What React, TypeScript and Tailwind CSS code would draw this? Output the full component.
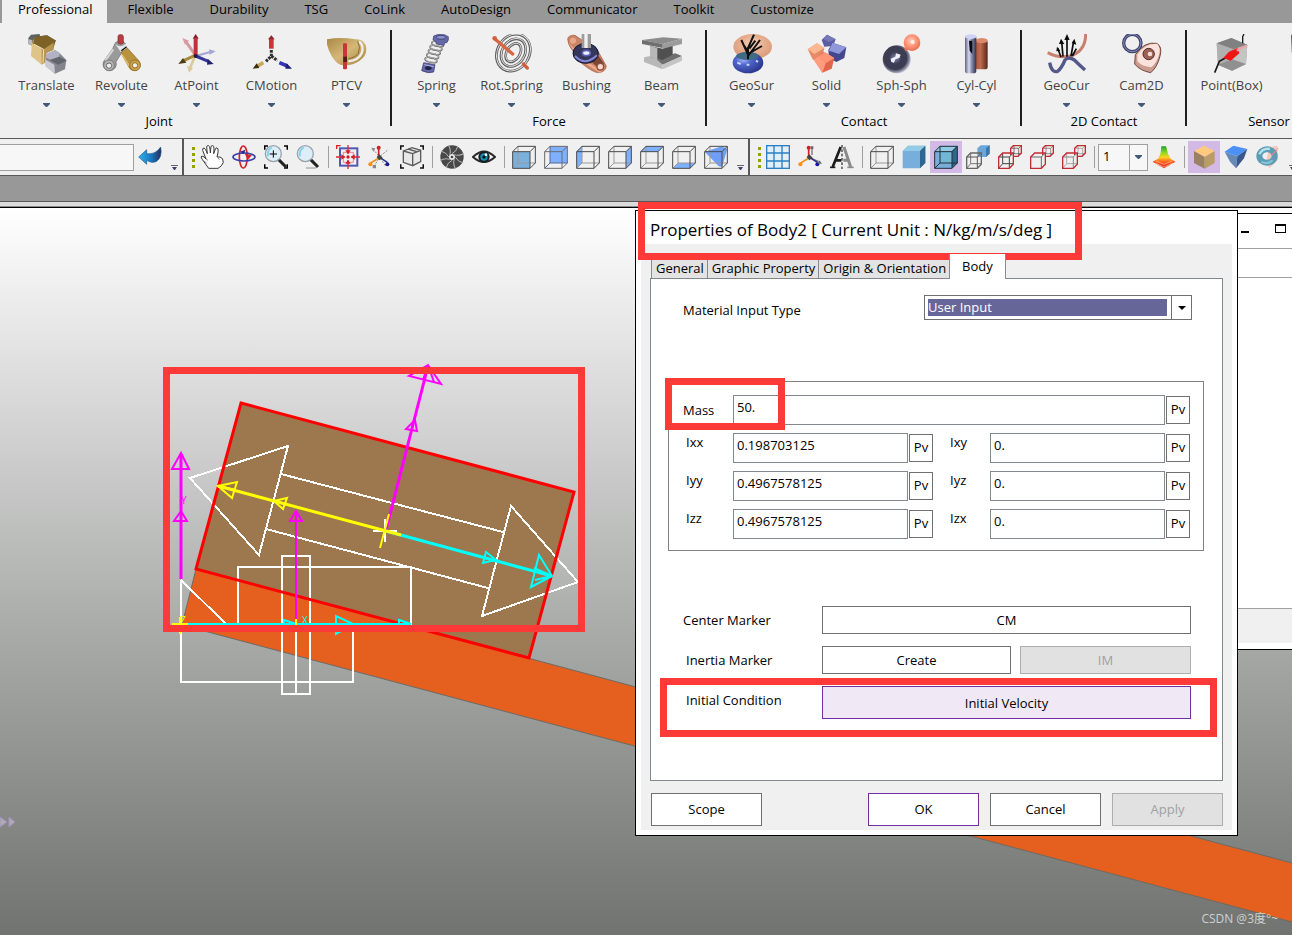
import type { ReactNode } from "react";

const tabs = ["Flexible", "Durability", "TSG", "CoLink", "AutoDesign", "Communicator", "Toolkit", "Customize"];

function Big({ children }: { children: ReactNode }) {
  return (
    <svg viewBox="0 0 120 120" className="h-10 w-10" aria-hidden="true">
      {children}
    </svg>
  );
}

function Small({ children }: { children: ReactNode }) {
  return (
    <svg viewBox="0 0 72 72" className="h-6 w-6" aria-hidden="true">
      {children}
    </svg>
  );
}

function Gradients() {
  return (
    <svg className="absolute h-0 w-0" aria-hidden="true">
      <defs>
        <radialGradient id="blueBall" cx="0.35" cy="0.35" r="0.7">
          <stop offset="0" stopColor="#a8b8ff" />
          <stop offset="0.35" stopColor="#5068cc" />
          <stop offset="1" stopColor="#2b358c" />
        </radialGradient>
        <radialGradient id="darkBall" cx="0.45" cy="0.45" r="0.55">
          <stop offset="0" stopColor="#8888a8" />
          <stop offset="0.4" stopColor="#3c3c54" />
          <stop offset="0.75" stopColor="#3c3c52" />
          <stop offset="1" stopColor="#b9b9cc" />
        </radialGradient>
        <radialGradient id="peachBall" cx="0.5" cy="0.4" r="0.6">
          <stop offset="0" stopColor="#f8d4c0" />
          <stop offset="0.5" stopColor="#e8b090" />
          <stop offset="1" stopColor="#d99a78" />
        </radialGradient>
        <radialGradient id="coralBall" cx="0.45" cy="0.4" r="0.6">
          <stop offset="0" stopColor="#ffd0c0" />
          <stop offset="0.6" stopColor="#ff8f70" />
          <stop offset="1" stopColor="#e07050" />
        </radialGradient>
        <linearGradient id="steel" x1="0" x2="1">
          <stop offset="0" stopColor="#5f627e" />
          <stop offset="0.35" stopColor="#d7daf0" />
          <stop offset="0.6" stopColor="#8488a8" />
          <stop offset="1" stopColor="#2e3048" />
        </linearGradient>
        <linearGradient id="copper" x1="0" x2="1">
          <stop offset="0" stopColor="#b0583c" />
          <stop offset="0.4" stopColor="#c06a4c" />
          <stop offset="1" stopColor="#54281c" />
        </linearGradient>
        <linearGradient id="gold" x1="0" y1="0" x2="1" y2="1">
          <stop offset="0" stopColor="#a88744" />
          <stop offset="0.5" stopColor="#d4b878" />
          <stop offset="1" stopColor="#a5813c" />
        </linearGradient>
        <linearGradient id="rainbow" x1="0" y1="0" x2="0" y2="1">
          <stop offset="0" stopColor="#20a030" />
          <stop offset="0.3" stopColor="#88d820" />
          <stop offset="0.55" stopColor="#ffd020" />
          <stop offset="0.75" stopColor="#ff6a20" />
          <stop offset="1" stopColor="#e82020" />
        </linearGradient>
        <linearGradient id="skyArrow" x1="0" x2="1">
          <stop offset="0" stopColor="#2fb0e8" />
          <stop offset="0.6" stopColor="#1672ba" />
          <stop offset="1" stopColor="#2a2c5a" />
        </linearGradient>
        <linearGradient id="grayFade" x1="0" y1="0" x2="0" y2="1">
          <stop offset="0" stopColor="#4c4c4c" />
          <stop offset="1" stopColor="#d0d0d0" />
        </linearGradient>
      </defs>
    </svg>
  );
}

/* ---------- ribbon icons ---------- */

const Translate = () => (
  <Big>
    <path d="M4 12L12 2L38 0L40 14L20 24L20 36L4 30Z" fill="#5e6368" />
    <path d="M4 16L16 18L16 34L4 30Z" fill="#b9bcc2" />
    <path d="M56 62L84 48L98 58L118 78L114 106L84 119L56 96Z" fill="#83868c" />
    <path d="M56 60L84 48L98 58L96 70L72 78L54 70Z" fill="#b2b2c4" />
    <path d="M68 78L96 68L119 80L94 92Z" fill="#62656c" />
    <path d="M54 76L82 92L84 118L58 100Z" fill="#c9cad2" />
    <path d="M22 8L60 4L86 20L78 48L48 60L14 36Z" fill="#765b22" />
    <path d="M22 10L14 34L12 66L44 92L50 60L44 44Z" fill="#dfc488" />
    <path d="M44 46L80 22L80 46L58 58L54 86L44 92Z" fill="#b8954e" />
    <path d="M22 10L60 4L88 20L50 46L18 30Z" fill="#7d6126" />
    <path d="M20 30L50 46L48 88" fill="none" stroke="#f5e2b4" strokeWidth="3" />
  </Big>
);

const Revolute = () => (
  <Big>
    <path d="M40 26Q54 14 70 28L60 54L42 84A20 20 0 1 1 4 84L32 44Z" fill="#9a9a9a" stroke="#707070" strokeWidth="2" />
    <path d="M34 46L10 80" stroke="#d4d4d4" strokeWidth="6" />
    <path d="M58 54L76 42L112 82A18 18 0 1 1 80 98L62 66Z" fill="#b8923c" stroke="#8d6c22" strokeWidth="2" />
    <path d="M60 62L82 96" stroke="#e0bc68" strokeWidth="5" />
    <circle cx="21" cy="94" r="16" fill="#b4b4b4" stroke="#7a7a7a" strokeWidth="3" />
    <circle cx="21" cy="95" r="8" fill="#efefef" stroke="#6a6a6a" strokeWidth="3" />
    <circle cx="99" cy="94" r="16" fill="#cba54f" stroke="#987424" strokeWidth="3" />
    <circle cx="99" cy="94" r="8" fill="#efefef" stroke="#94701e" strokeWidth="3" />
    <path d="M40 30Q54 44 70 30L74 42L56 54Z" fill="#e6e6e6" />
    <rect x="48" y="2" width="16" height="28" rx="6" fill="#c03a42" stroke="#7c2228" strokeWidth="2" />
    <path d="M58 50L74 38" stroke="#111" strokeWidth="4" />
  </Big>
);

const AtPoint = () => (
  <Big>
    <path d="M54 62L26 22" stroke="#d99a9e" strokeWidth="9" />
    <path d="M16 12L36 20L24 32Z" fill="#d99a9e" />
    <path d="M56 66L100 54" stroke="#a4a4d8" strokeWidth="6" />
    <path d="M96 46L116 52L98 62Z" fill="#a4a4d8" />
    <path d="M54 66L40 100" stroke="#d8ca9c" strokeWidth="8" />
    <path d="M30 96L48 102L36 116Z" fill="#d8ca9c" />
    <path d="M54 64L20 80" stroke="#a8893a" strokeWidth="9" />
    <path d="M4 90L18 72L28 86Z" fill="#4d3d14" />
    <path d="M56 66L94 82" stroke="#35359a" strokeWidth="9" />
    <path d="M92 74L110 90L90 92Z" fill="#22226c" />
    <path d="M56 66V14" stroke="#c2303a" strokeWidth="12" />
    <path d="M47 14L56 0L65 14Z" fill="#8c1c24" />
    <circle cx="56" cy="66" r="6" fill="#1c1c44" />
  </Big>
);

const CMotion = () => (
  <Big>
    <path d="M58 44V14" stroke="#c9353c" strokeWidth="14" />
    <path d="M48 16L58 4L68 16Z" fill="#8a2a2e" />
    <path d="M58 48V66L42 82M58 66L76 80" stroke="#303030" strokeWidth="9" fill="none" strokeDasharray="8 3" />
    <path d="M34 86L14 98" stroke="#c9a95a" strokeWidth="11" />
    <path d="M2 104L14 88L22 102Z" fill="#3b2e0c" />
    <path d="M82 86L106 96" stroke="#3434b0" strokeWidth="11" />
    <path d="M104 88L120 104L100 104Z" fill="#1c1c78" />
  </Big>
);

const Ptcv = () => (
  <Big>
    <path d="M0 16Q40 8 84 16Q108 14 116 34Q124 62 98 80Q70 98 40 92Q22 86 6 50Q-4 24 0 16Z" fill="url(#gold)" />
    <path d="M96 22Q112 34 104 58Q94 80 64 82" fill="none" stroke="#efefef" strokeWidth="7" />
    <path d="M92 22Q102 40 94 58Q86 70 64 74" fill="none" stroke="#8a6c2c" strokeWidth="3" />
    <rect x="48" y="28" width="12" height="78" rx="3" fill="#c8363a" />
    <path d="M49 68H60V84H49Z" fill="#5c1a16" />
  </Big>
);

const Spring = () => (
  <Big>
    {[28, 40, 52, 64, 76].map((y, i) => (
      <g key={y} transform={`rotate(12 ${62 - i * 5} ${y + 2})`}>
        <ellipse cx={62 - i * 5} cy={y + 2} rx="18" ry="7" fill="none" stroke="#6c6c6c" strokeWidth="5" />
        <ellipse cx={62 - i * 5} cy={y + 1} rx="18" ry="7" fill="none" stroke="#cfcfcf" strokeWidth="2" />
      </g>
    ))}
    <path d="M50 6Q74 -6 94 8V18Q90 30 84 26L80 34L58 30L56 22L48 18Z" fill="#6468a8" stroke="#33366c" strokeWidth="2" />
    <ellipse cx="72" cy="10" rx="14" ry="6" fill="#8c90cc" stroke="#2b2d58" strokeWidth="2" />
    <path d="M20 86L54 92L50 114Q34 120 14 110Z" fill="#6266a6" stroke="#2d3060" strokeWidth="2" />
    <ellipse cx="34" cy="102" rx="10" ry="6" fill="#20244c" />
    <path d="M22 92L50 98" stroke="#b2b5e6" strokeWidth="3" />
  </Big>
);

const RotSpring = () => (
  <Big>
    {[50, 36, 22].map((r) => (
      <g key={r} transform="rotate(-58 64 56)">
        <ellipse cx="64" cy="56" rx={r + 8} ry={r - 2} fill="none" stroke="#5a5a5a" strokeWidth="8" />
        <ellipse cx="65" cy="56" rx={r + 8} ry={r - 2} fill="none" stroke="#dcdcdc" strokeWidth="3" />
      </g>
    ))}
    <path d="M94 90L106 102" stroke="#d2613e" strokeWidth="10" strokeLinecap="round" />
    <path d="M8 14L62 60" stroke="#d66846" strokeWidth="10" strokeLinecap="round" />
    <circle cx="8" cy="13" r="7" fill="#d2603e" />
  </Big>
);

const Bushing = () => (
  <Big>
    <path d="M2 14Q6 2 24 4L92 50L118 96Q116 114 94 116Q78 116 44 88L14 46Q2 30 2 14Z" fill="#c98468" stroke="#9d5b44" strokeWidth="2" />
    <path d="M4 24L20 52L60 92L98 116L114 104L90 102L52 78Z" fill="#f0a78c" />
    <path d="M82 48L112 90L92 100L74 84Z" fill="#7c4634" />
    <circle cx="18" cy="20" r="9" fill="#e9a88c" />
    <circle cx="100" cy="98" r="10" fill="#f2d8cc" stroke="#8b4c36" strokeWidth="4" />
    <ellipse cx="56" cy="58" rx="38" ry="30" fill="#34365c" stroke="#14152c" strokeWidth="3" />
    <path d="M24 66Q54 98 90 64" fill="none" stroke="#8488d4" strokeWidth="6" />
    <ellipse cx="58" cy="57" rx="12" ry="8" fill="#eef0ff" stroke="#5c62b8" strokeWidth="5" />
    <rect x="44" y="0" width="28" height="42" fill="#9c9c9c" />
    <rect x="52" y="0" width="10" height="42" fill="#f0f0f0" />
  </Big>
);

const Beam = () => (
  <Big>
    <path d="M0 18L64 10L120 14L62 30Z" fill="#8c8c8c" />
    <path d="M0 18L62 30V42L0 30Z" fill="#6f6f6f" />
    <path d="M62 30L120 14V30L62 44Z" fill="#9c9c9c" />
    <path d="M6 70L44 62L60 84L62 106L6 84Z" fill="#b8b8b8" />
    <path d="M44 76L100 58L120 66L62 92Z" fill="#707070" />
    <path d="M62 92L120 66V80L62 106Z" fill="#c4c4c4" />
    <path d="M24 36L62 44L92 36V62L62 78L24 68Z" fill="#505050" />
    <path d="M24 36L46 42V76L24 68Z" fill="#b8b8b8" />
  </Big>
);

const GeoSur = () => (
  <Big>
    <ellipse cx="62" cy="38" rx="58" ry="38" fill="url(#peachBall)" />
    <ellipse cx="48" cy="86" rx="46" ry="32" fill="url(#blueBall)" />
    <ellipse cx="46" cy="66" rx="34" ry="12" fill="#3f6c84" />
    <path d="M48 76V42L66 2M48 62L28 18M48 66L84 18M48 60L90 36M46 50L34 32M52 44L70 20" fill="none" stroke="#101010" strokeWidth="6" />
    <path d="M16 86L26 90M44 92H52M72 80L78 84" stroke="#c8dcff" strokeWidth="6" />
  </Big>
);

const Solid = () => (
  <Big>
    <path d="M44 18L60 2L86 16L78 36L52 38Z" fill="#5b5da2" />
    <path d="M60 2L86 16L66 24L48 14Z" fill="#7678b8" />
    <path d="M64 48L76 26L118 40L112 72L88 84L66 72Z" fill="#44478e" />
    <path d="M76 26L118 40L96 60L66 50Z" fill="#9098dc" />
    <path d="M2 46L30 28L52 42L46 68L18 78Z" fill="#e78a66" />
    <path d="M2 46L30 28L52 42L22 60Z" fill="#ffb892" />
    <path d="M22 76L48 54L82 72L74 104L46 116Z" fill="#e0654a" />
    <path d="M34 66L54 54L82 72L56 88Z" fill="#ff9474" />
    <path d="M20 78L34 66L56 88L46 116Z" fill="#ff9c80" />
  </Big>
);

const SphSph = () => (
  <Big>
    <circle cx="44" cy="76" r="42" fill="url(#darkBall)" />
    <path d="M26 74L40 68L42 58L56 62L52 72L40 76L36 86L28 84Z" fill="#eef0ff" />
    <path d="M66 40L82 46L70 52Z" fill="#e8735c" />
    <circle cx="90" cy="26" r="25" fill="url(#coralBall)" />
    <circle cx="92" cy="24" r="6" fill="#fff0e8" />
  </Big>
);

const CylCyl = () => (
  <Big>
    <rect x="56" y="18" width="36" height="88" rx="8" fill="url(#copper)" />
    <ellipse cx="74" cy="20" rx="18" ry="8" fill="#d98a6c" />
    <rect x="24" y="4" width="34" height="114" rx="8" fill="url(#steel)" />
    <ellipse cx="41" cy="8" rx="17" ry="7" fill="#cfd2f8" />
    <path d="M36 20H46V60L38 50Z" fill="#0a0a14" />
  </Big>
);

const GeoCur = () => (
  <Big>
    <path d="M2 56Q40 76 76 64Q116 48 116 0" fill="none" stroke="#c8806e" strokeWidth="9" />
    <path d="M8 86Q14 118 32 112Q44 102 54 78Q64 66 82 78Q96 92 114 108" fill="none" stroke="#55588a" strokeWidth="10" />
    <path d="M60 68V10M48 68L44 22M72 66L80 22M42 70L32 42M76 66L88 44" stroke="#0c0c0c" strokeWidth="5" />
    <path d="M60 0L68 18H52ZM42 14L52 30H36ZM82 14L88 32L74 28ZM30 38L40 50L28 52Z" fill="#0c0c0c" />
  </Big>
);

const Cam2D = () => (
  <Big>
    <path d="M40 62Q66 22 104 28Q122 38 114 66Q106 100 86 116Q54 110 38 90Z" fill="#cb9c90" stroke="#75433a" strokeWidth="3" />
    <path d="M46 62Q70 26 106 30Q118 44 110 66Q104 86 88 100Q60 98 46 82Z" fill="#fbe2dc" />
    <circle cx="80" cy="60" r="17" fill="#9c6258" stroke="#512a24" strokeWidth="3" />
    <circle cx="84" cy="60" r="7" fill="#f3dcd6" />
    <circle cx="31" cy="27" r="26" fill="none" stroke="#3e4168" strokeWidth="10" />
    <circle cx="31" cy="27" r="26" fill="none" stroke="#8c8fbe" strokeWidth="3" />
  </Big>
);

const PointBox = () => (
  <Big>
    <path d="M14 28L58 12L106 32L102 90L60 110L18 92Z" fill="#a5a5a5" />
    <path d="M14 28L58 12L106 32L64 46Z" fill="#808080" />
    <path d="M64 46L106 32L102 90L62 110Z" fill="#c4c4c4" />
    <path d="M14 28L64 46L62 110L18 92Z" fill="#b0b0b0" />
    <path d="M18 92L60 76L102 90L60 110Z" fill="#909090" />
    <path d="M92 28V8L96 0" stroke="#1a1a1a" strokeWidth="4" fill="none" />
    <path d="M8 116L22 82L40 72" stroke="#1a1a1a" strokeWidth="5" fill="none" />
    <path d="M34 72L50 54L76 42L82 58L56 80Z" fill="#f01414" />
    <path d="M74 50L104 34" stroke="#f0a0a0" strokeWidth="6" />
  </Big>
);

const SensorCut = () => (
  <Big>
    <rect x="12" y="0" width="100" height="58" rx="6" fill="url(#grayFade)" />
  </Big>
);

type Item = { label: string; icon: ReactNode; noMenu?: boolean };

const groups: { title: string; items: (Item | null)[] }[] = [
  {
    title: "Joint",
    items: [
      null,
      { label: "Translate", icon: <Translate /> },
      { label: "Revolute", icon: <Revolute /> },
      { label: "AtPoint", icon: <AtPoint /> },
      { label: "CMotion", icon: <CMotion /> },
      { label: "PTCV", icon: <Ptcv /> },
    ],
  },
  {
    title: "Force",
    items: [
      { label: "Spring", icon: <Spring /> },
      { label: "Rot.Spring", icon: <RotSpring /> },
      { label: "Bushing", icon: <Bushing /> },
      { label: "Beam", icon: <Beam /> },
    ],
  },
  {
    title: "Contact",
    items: [
      { label: "GeoSur", icon: <GeoSur /> },
      { label: "Solid", icon: <Solid /> },
      { label: "Sph-Sph", icon: <SphSph /> },
      { label: "Cyl-Cyl", icon: <CylCyl /> },
    ],
  },
  {
    title: "2D Contact",
    items: [
      { label: "GeoCur", icon: <GeoCur /> },
      { label: "Cam2D", icon: <Cam2D /> },
    ],
  },
  {
    title: "Sensor",
    items: [
      { label: "Point(Box)", icon: <PointBox />, noMenu: true },
      { label: "Line", icon: <SensorCut />, noMenu: true },
    ],
  },
];

function Ribbon() {
  return (
    <div className="-ml-[73px] flex h-[115px] pt-[7px] pb-3">
      {groups.map((g) => (
        <section key={g.title} className="flex shrink-0 flex-col border-r-2 border-[#1f1f1f] pr-[6px] pl-[7px]">
          <div className="flex h-[84px] shrink-0 items-start">
            {g.items.map((it, i) =>
              it ? (
                <button key={it.label} className="flex w-[75px] flex-col items-center pt-1 text-[#444]">
                  {it.icon}
                  <span className="mt-px leading-5">{it.label}</span>
                  {!it.noMenu && (
                    <svg viewBox="0 0 7 4" className="mt-2 h-1 w-[7px]" aria-hidden="true">
                      <path d="M0 0H7V1L4 4H3L0 1Z" fill="#44597a" />
                    </svg>
                  )}
                </button>
              ) : (
                <span key={i} className="w-[75px]" />
              )
            )}
          </div>
          <h2 className="text-center leading-[14px]">{g.title}</h2>
        </section>
      ))}
    </div>
  );
}

/* ---------- toolbar icons ---------- */

const cubeLines = "M2 20H54V70H2ZM2 20L18 4H70L54 20M70 4V54L54 70M18 4V54H70M18 54L2 70";

function Cube({ face, color = "#7fb0ff", line = "#4a4a4a", back = "#9a9a9a" }: { face?: string; color?: string; line?: string; back?: string }) {
  return (
    <Small>
      {face && <path d={face} fill={color} />}
      <path d="M18 4V54H70M18 54L2 70" fill="none" stroke={back} strokeWidth="3" />
      <path d="M2 20H54V70H2ZM2 20L18 4H70L54 20M70 4V54L54 70" fill="none" stroke={line} strokeWidth="3" />
    </Small>
  );
}

// two stacked cubes: silhouette in one colour, inner edges in another
function TwinCube({ outline, inner, hidden = "none", fill }: { outline: string; inner: string; hidden?: string; fill?: boolean }) {
  return (
    <Small>
      {fill ? (
        <>
          <path d="M34 10L44 1H71V26L60 36H34Z" fill="#6ca6d8" />
          <path d="M60 10L71 1V26L60 36Z" fill="#3d78a8" />
        </>
      ) : (
        <>
          <path d="M48 2V26H70M40 10H62V32M62 10L70 2" fill="none" stroke={inner} strokeWidth="2" />
          <path d="M38 30V10L46 2H70V24L60 34H48" fill="none" stroke={outline} strokeWidth="4" />
        </>
      )}
      <path d="M14 24V56H46M14 56L2 70" fill="none" stroke={hidden} strokeWidth="3" />
      <path d="M2 36H34V70M34 36L46 24" fill="none" stroke={inner} strokeWidth="3" />
      <path d="M2 70V36L14 24H46V58L34 70Z" fill="none" stroke={outline} strokeWidth="4" />
    </Small>
  );
}

const Hand = () => (
  <Small>
    <path
      d="M26 70L6 42Q0 34 6 33Q12 34 18 42L8 16Q7 9 12 9Q17 10 22 26L20 6Q21 0 26 2Q30 4 31 24L33 4Q36 -1 41 4Q43 8 41 26L47 10Q52 6 54 12Q56 18 51 36L60 36Q70 38 70 52Q66 64 54 70Z"
      fill="#fff"
      stroke="#3a3a3a"
      strokeWidth="3"
    />
    <path d="M18 42L24 46M6 44L20 54M52 36L58 44" stroke="#888" strokeWidth="3" />
  </Small>
);

const Orbit = () => (
  <Small>
    <ellipse cx="34" cy="36" rx="12" ry="33" fill="none" stroke="#d8202c" strokeWidth="5" />
    <ellipse cx="36" cy="36" rx="33" ry="12" fill="none" stroke="#3840a8" strokeWidth="5" />
    <path d="M38 26L60 30L48 44Z" fill="#d8202c" />
    <path d="M24 20L40 14L36 28Z" fill="#222c90" />
  </Small>
);

const Lens = ({ fit }: { fit?: boolean }) => (
  <Small>
    {fit && <path d="M2 14V3H12M60 3H70V14M2 58V69H12M60 69H70V58" fill="none" stroke="#000" strokeWidth="5" />}
    <path d="M44 44L66 66" stroke="#222" strokeWidth="9" />
    <circle cx="28" cy="26" r="24" fill="#dceef8" stroke="#9aa2aa" strokeWidth="4" />
    <path d="M12 34Q8 14 24 8" fill="none" stroke="#8ccff0" strokeWidth="6" />
    {fit && <path d="M28 16V38M17 27H39" stroke="#000" strokeWidth="3" />}
    {!fit && <path d="M30 69H60" stroke="#aaa" strokeWidth="4" />}
  </Small>
);

const Target = () => (
  <Small>
    <path d="M2 12V2H14" fill="none" stroke="#e02028" strokeWidth="4" />
    <rect x="12" y="10" width="52" height="52" fill="none" stroke="#5058b0" strokeWidth="6" />
    <path d="M22 22H52V52H22Z" fill="none" stroke="#f08088" strokeWidth="3" />
    <path d="M36 0V26M36 46V72M0 36H26M46 36H72" fill="none" stroke="#e02834" strokeWidth="4" />
    <path d="M28 16L36 28L44 16ZM28 56L36 44L44 56ZM16 28L28 36L16 44ZM56 28L44 36L56 44Z" fill="#d81828" />
    <circle cx="36" cy="36" r="5" fill="#d81828" />
  </Small>
);

const Axes = ({ low }: { low?: boolean }) => (
  <Small>
    {!low && <path d="M14 12L34 34M58 16L36 34M18 64L34 38M52 62L36 38" stroke="#8a8a8a" strokeWidth="3" strokeDasharray="6 4" />}
    {low && <path d="M40 40L62 50M42 30V8" stroke="#777" strokeWidth="4" />}
    <path d="M34 38L8 54" stroke="#f59018" strokeWidth="5" />
    <path d="M36 38L58 52" stroke="#2c3488" strokeWidth="5" />
    <path d="M32 36V8" stroke="#c82030" strokeWidth="5" />
    <circle cx="32" cy="8" r="6" fill="#d81c28" />
    <circle cx="7" cy="58" r="6" fill="#ff8c10" />
    <circle cx="58" cy="58" r="6" fill="#14149c" />
    <path d="M26 36L34 28L44 38L34 46Z" fill="#444" />
    {!low && <path d="M10 8L22 10L16 20ZM14 60H24V70H14Z" fill="#888" />}
    {low && <path d="M64 46L72 56L60 56ZM38 4H46V12H38Z" fill="#666" />}
  </Small>
);

const FitCube = () => (
  <Small>
    <path d="M2 14V3H12M60 3H70V14M2 58V69H12M60 69H70V58" fill="none" stroke="#111" strokeWidth="5" />
    <path d="M10 18L36 8L62 16V50L38 62L10 52Z" fill="#e8e8e8" stroke="#5c5c5c" strokeWidth="4" />
    <path d="M10 18L38 26L62 16M38 26V62M24 12L50 20" fill="none" stroke="#5c5c5c" strokeWidth="4" />
  </Small>
);

const Aperture = () => (
  <Small>
    <circle cx="36" cy="36" r="35" fill="#484848" />
    {[0, 45, 90, 135, 180, 225, 270, 315].map((a) => (
      <path key={a} d="M36 26Q50 20 54 2" fill="none" stroke="#b8b8b8" strokeWidth="3" transform={`rotate(${a} 36 36)`} />
    ))}
    <circle cx="36" cy="36" r="9" fill="#e8e8e8" />
    <circle cx="36" cy="36" r="4" fill="#444" />
  </Small>
);

const Eye = () => (
  <Small>
    <path d="M3 36Q36 4 69 36Q36 66 3 36Z" fill="#f4f4f4" stroke="#2a2a2a" strokeWidth="6" />
    <circle cx="36" cy="36" r="17" fill="#161e24" />
    <circle cx="36" cy="36" r="11" fill="#178fae" />
    <circle cx="36" cy="36" r="5" fill="#06121a" />
    <circle cx="42" cy="29" r="4" fill="#fff" />
  </Small>
);

const GridIcon = () => (
  <Small>
    <rect x="2" y="2" width="68" height="68" fill="#e4eef6" stroke="#2b7fc2" strokeWidth="4" />
    <path d="M24 2V70M48 2V70M2 24H70M2 48H70" stroke="#2b7fc2" strokeWidth="4" />
  </Small>
);

const Mirror = () => (
  <Small>
    <path d="M32 6L8 66M14 46H34" stroke="#1c1c1c" strokeWidth="8" fill="none" />
    <path d="M0 67H16" stroke="#1c1c1c" strokeWidth="5" />
    <path d="M42 6L62 66M40 46H56" stroke="#8a8a8a" strokeWidth="9" fill="none" />
    <path d="M52 67H71" stroke="#8a8a8a" strokeWidth="5" />
    <path d="M36 0V72" stroke="#000" strokeWidth="3" strokeDasharray="8 5" />
  </Small>
);

const SolidCube = ({ edges }: { edges?: boolean }) => (
  <Small>
    <path d="M2 18L18 2H70V54L54 70H2Z" fill="#78aedb" />
    <path d="M2 18L18 2H70L54 18Z" fill="#94cbe4" />
    <path d="M54 18L70 2V54L54 70Z" fill="#2f6790" />
    {edges && <path d="M18 20H54V54H18Z" fill="#72b8d4" />}
    {edges && <path d={cubeLines} fill="none" stroke="#24303a" strokeWidth="3" />}
  </Small>
);

const Peak = () => (
  <Small>
    <path d="M2 50L36 34L70 50L36 70Z" fill="#e83020" />
    <path d="M28 4H42L48 26L56 42L70 50L36 64L2 50L18 42L26 24Z" fill="url(#rainbow)" />
    <path d="M12 48L36 58L60 48M10 54L36 66L62 54" fill="none" stroke="#ffc890" strokeWidth="2" />
  </Small>
);

const GoldBox = () => (
  <Small>
    <path d="M6 18L36 2L68 18L38 36Z" fill="#ffca80" />
    <path d="M6 18L38 36V71L6 54Z" fill="#9a8260" />
    <path d="M68 18L38 36V71L68 54Z" fill="#b99c66" />
  </Small>
);

const Gem = () => (
  <Small>
    <path d="M2 20L28 2L70 12L40 34Z" fill="#4a90f8" />
    <path d="M2 20L40 34L36 70L18 50Z" fill="#6689b8" />
    <path d="M70 12L40 34L36 70L60 40Z" fill="#38588c" />
  </Small>
);

const Torus = () => (
  <Small>
    <path d="M40 6L64 2L66 44L40 70L30 50Z" fill="#f5c8be" />
    <ellipse cx="33" cy="33" rx="23" ry="20" fill="none" stroke="#5c9cb4" strokeWidth="18" />
    <path d="M10 28Q20 8 42 12" fill="none" stroke="#b4e0ea" strokeWidth="7" />
    <path d="M16 50Q34 60 50 46" fill="none" stroke="#84c4d4" strokeWidth="6" />
    <path d="M48 30L66 10" stroke="#f08a80" strokeWidth="4" strokeDasharray="5 3" />
  </Small>
);

const Tool = ({ label, on, children }: { label: string; on?: boolean; children: ReactNode }) => (
  <button aria-label={label} className={`flex h-8 w-8 shrink-0 items-center justify-center ${on ? "bg-[#d3b9e6]" : ""}`}>
    {children}
  </button>
);

const Sep = () => (
  <span className="flex h-[22px] w-2 shrink-0 justify-center">
    <span className="w-px bg-[#a0a0a0]" />
  </span>
);

const Grip = () => (
  <span className="flex w-3 shrink-0 flex-col gap-[3px] pl-2">
    {[0, 1, 2, 3].map((n) => (
      <span key={n} className="h-[3px] w-[3px] bg-[#94a100]" />
    ))}
  </span>
);

const More = () => (
  <span className="flex h-9 w-4 shrink-0 items-end justify-center pb-[5px]">
    <svg viewBox="0 0 7 5" className="h-[5px] w-[7px]" aria-hidden="true">
      <path d="M0 0H7" stroke="#666" strokeWidth="2" />
      <path d="M1 2H6L4 5H3Z" fill="#3c4470" />
    </svg>
  </span>
);

function Toolbar() {
  return (
    <div className="flex h-[38px] items-center overflow-hidden border-y border-[#585858]">
      <input aria-label="Name" className="-ml-1 h-[27px] w-[138px] shrink-0 border border-[#a0a0a0] bg-[#f7f7f7]" />
      <Tool label="Back">
        <Small>
          <path d="M2 36L26 14V26Q52 30 68 6Q74 38 54 50Q40 56 26 46V58Z" fill="url(#skyArrow)" stroke="#1c5a90" strokeWidth="2" />
        </Small>
      </Tool>
      <More />
      <span className="h-full w-[2px] shrink-0 bg-[#585858]" />
      <Grip />
      <Tool label="Pan"><Hand /></Tool>
      <Tool label="Rotate"><Orbit /></Tool>
      <Tool label="Zoom window"><Lens fit /></Tool>
      <Tool label="Zoom"><Lens /></Tool>
      <Sep />
      <Tool label="Center"><Target /></Tool>
      <Tool label="Axes"><Axes /></Tool>
      <Tool label="Fit"><FitCube /></Tool>
      <Sep />
      <Tool label="Camera"><Aperture /></Tool>
      <Tool label="View"><Eye /></Tool>
      <Sep />
      <Tool label="Front"><Cube face="M2 20H54V70H2Z" color="#7ab0dc" /></Tool>
      <Tool label="Back view"><Cube face="M18 4H70V54H18Z" back="#4a6aa0" line="#6a6a6a" /></Tool>
      <Tool label="Left"><Cube face="M2 20L18 4V54L2 70Z" /></Tool>
      <Tool label="Right"><Cube face="M54 20L70 4V54L54 70Z" /></Tool>
      <Tool label="Top"><Cube face="M2 20L18 4H70L54 20Z" /></Tool>
      <Tool label="Bottom"><Cube face="M2 70L18 54H70L54 70Z" /></Tool>
      <Tool label="Isometric"><Cube face="M2 20L54 4L70 12L54 66L44 64Z" color="#6f9ff4" /></Tool>
      <More />
      <span className="h-full w-[2px] shrink-0 bg-[#585858]" />
      <Grip />
      <Tool label="Grid"><GridIcon /></Tool>
      <Tool label="Triad"><Axes low /></Tool>
      <Tool label="Mirror"><Mirror /></Tool>
      <Sep />
      <Tool label="Wireframe"><Cube /></Tool>
      <Tool label="Shade"><SolidCube /></Tool>
      <Tool label="Shade with edges" on><SolidCube edges /></Tool>
      <Tool label="Layer shade"><TwinCube outline="#666" inner="#555" hidden="#777" fill /></Tool>
      <Tool label="Layer wire"><TwinCube outline="#c42a34" inner="#444" hidden="#444" /></Tool>
      <Tool label="Layer hidden"><TwinCube outline="#c42a34" inner="#666" /></Tool>
      <Tool label="Layer all"><TwinCube outline="#c42a34" inner="#888" hidden="#aaa" /></Tool>
      <Sep />
      <div className="relative h-[27px] w-[50px] shrink-0">
        <select aria-label="Line width" className="h-full w-full appearance-none border border-[#a0a0a0] bg-[#f7f7f7] pl-1 text-[13px] text-black">
          <option>1</option>
        </select>
        <span className="pointer-events-none absolute inset-y-px right-px flex w-[18px] items-center justify-center border-l border-[#a0a0a0]">
          <svg viewBox="0 0 7 4" className="h-1 w-[7px]" aria-hidden="true">
            <path d="M0 0H7V1L4 4H3L0 1Z" fill="#44597a" />
          </svg>
        </span>
      </div>
      <Tool label="Contour"><Peak /></Tool>
      <Sep />
      <Tool label="Box" on><GoldBox /></Tool>
      <Tool label="Cone"><Gem /></Tool>
      <Tool label="Torus"><Torus /></Tool>
      <More />
    </div>
  );
}

/* ---------- working model ---------- */

function Scene() {
  return (
    <svg className="absolute inset-0 h-full w-full" aria-hidden="true">
      <g transform="translate(0 -208)" fill="none">
        <path d="M196 569L182 625L1292 922V863Z" fill="#e55f1f" />
        <path d="M196 569L182 625L1292 922M1292 863L196 569" stroke="#6b6b66" strokeWidth="1" />
        <path d="M241 403L574 492L529 658L196 569Z" fill="#9d774d" />

        <g stroke="#fff" strokeWidth="2" shapeRendering="crispEdges">
          <path d="M288 446L190 478L259 555ZM281 474L503 532M266 529L488 588M511 506L578 582L482 616Z" />
          <path d="M238 625V567H411V625M282 556H310V694H282ZM181 580V682H353V625M296 625V694M181 580L227 625M181 625H227" />
        </g>

        <path d="M241 403L574 492L529 658L196 569Z" stroke="#f00" strokeWidth="3" />

        <g stroke="#f0f" strokeWidth="2">
          <path d="M181 579V454M386 530L428 366" strokeWidth="3" />
          <path d="M181 453L172 469H189ZM181 511L174 521H187ZM296 625V511M296 511L290 521H302Z" />
          <path d="M428 365L409 376L441 384ZM428 365L423 380M428 365L434 382M415 420L406 429L417 431Z" />
        </g>
        <g stroke="#0ff" strokeWidth="2">
          <path d="M386 531L552 576" strokeWidth="3" />
          <path d="M552 576L539 555L531 587ZM552 576L534 568M552 576L535 580M496 560L486 552L483 563Z" />
          <path d="M181 624H411M353 624L336 616V634ZM296 624L284 620V628M411 624L399 620V628" />
        </g>
        <path d="M373 531H397M385 519V542" stroke="#fff" strokeWidth="2" />
        <g stroke="#ff0" strokeWidth="2">
          <path d="M401 535L218 486" strokeWidth="3" />
          <path d="M218 486L237 482L232 498ZM218 486L236 490M274 501L287 498L283 509ZM389 514L380 548" />
          <path d="M172 624H188M180 617V634M296 619V626" />
        </g>
        <g fontSize="10" fontFamily="Open Sans, sans-serif">
          <text x="181" y="504" fill="#f0f">Y</text>
          <text x="302" y="624" fill="#0ff">X</text>
          <text x="180" y="624" fill="#ff0">Z</text>
        </g>
      </g>
    </svg>
  );
}

/* ---------- properties dialog ---------- */

const field = "h-[30px] min-w-0 border border-[#828790] bg-white px-[3px] pb-[7px] outline-none";
const btn = "border border-[#707070] bg-white text-center text-black disabled:border-[#adadad] disabled:bg-[#e1e1e1] disabled:text-[#a0a0a0]";
const pv = "my-px ml-px w-6 border border-[#707070] bg-white text-center";

const inertia = [
  ["Ixx", "0.198703125", "Ixy", "0."],
  ["Iyy", "0.4967578125", "Iyz", "0."],
  ["Izz", "0.4967578125", "Izx", "0."],
];

function PropertiesDialog() {
  return (
    <div role="dialog" aria-labelledby="dlg-title" className="absolute top-[2px] left-[635px] w-[603px] border border-black bg-white px-[5px] pb-[5px] text-black">
      <h1 id="dlg-title" className="h-[33px] pl-[9px] text-[17px] leading-[38px] whitespace-nowrap">
        Properties of Body2 [ Current Unit : N/kg/m/s/deg ]
      </h1>
      <div className="bg-[#f0f0f0] px-[9px] pb-1">
        <div role="tablist" className="flex h-[34px] items-end pl-px leading-5 whitespace-nowrap">
          {["General", "Graphic Property", "Origin & Orientation"].map((t) => (
            <button key={t} role="tab" className="h-5 border-l border-[#8a8a92] bg-[#e3e3e3] pr-[3px] pl-1">
              {t}
            </button>
          ))}
          <button role="tab" aria-selected="true" className="z-10 -mb-px h-[25px] border-x border-[#8a8a92] bg-white px-3 pb-px">
            Body
          </button>
        </div>

        <div className="border border-[#828790] bg-white pt-4 pb-[61px]">
          <div className="flex h-[25px] items-end justify-between pr-[30px] pl-8">
            <label htmlFor="material" className="leading-5">Material Input Type</label>
            <div className="relative h-full w-[268px] border border-[#707070] bg-white p-[3px]">
              <select id="material" className="block h-[17px] w-[239px] appearance-none bg-[#666699] leading-[17px] text-white">
                <option>User Input</option>
              </select>
              <span className="pointer-events-none absolute inset-y-0 right-0 flex w-5 items-center justify-center border-l border-[#707070]">
                <svg viewBox="0 0 8 4" className="h-1 w-2" aria-hidden="true">
                  <path d="M0 0H8L4 4Z" />
                </svg>
              </span>
            </div>
          </div>

          <div className="mt-[61px] mr-[18px] ml-[17px] flex flex-col gap-2 border border-[#828282] pt-[13px] pr-[13px] pb-[11px] pl-[14px]">
            <div className="flex">
              <label htmlFor="mass" className="w-[50px] leading-[30px]">Mass</label>
              <input id="mass" defaultValue="50." className={`${field} flex-1`} />
              <button className={pv}>Pv</button>
            </div>
            {inertia.map(([a, av, b, bv]) => (
              <div key={a} className="grid grid-cols-[50px_1fr_25px_57px_1fr_25px]">
                <label htmlFor={a} className="pl-[3px] leading-[18px]">{a}</label>
                <input id={a} defaultValue={av} className={field} />
                <button className={pv}>Pv</button>
                <label htmlFor={b} className="pl-[17px] leading-[18px]">{b}</label>
                <input id={b} defaultValue={bv} className={field} />
                <button className={pv}>Pv</button>
              </div>
            ))}
          </div>

          <div className="mt-[55px] grid grid-cols-[139px_1fr] gap-y-3 pr-[31px] pl-8 leading-[28px]">
            <span>Center Marker</span>
            <button className={`${btn} h-7 leading-[26px]`}>CM</button>
            <span className="pl-[3px]">Inertia Marker</span>
            <div className="flex gap-[9px]">
              <button className={`${btn} h-7 w-[189px] leading-[26px]`}>Create</button>
              <button disabled className={`${btn} h-7 flex-1 leading-[26px]`}>IM</button>
            </div>
            <span className="pl-[3px]">Initial Condition</span>
            <button className="h-[33px] border border-[#7030a0] bg-[#f1e8f6]">Initial Velocity</button>
          </div>
        </div>

        <div className="mt-3 flex justify-end gap-[11px] pl-px">
          <button className={`${btn} mr-auto h-[33px] w-[111px]`}>Scope</button>
          <button className="h-[33px] w-[111px] border border-[#7030a0] bg-white">OK</button>
          <button className={`${btn} h-[33px] w-[111px]`}>Cancel</button>
          <button disabled className={`${btn} h-[33px] w-[111px]`}>Apply</button>
        </div>
      </div>
    </div>
  );
}

function BackWindow() {
  return (
    <div className="absolute top-[5px] right-0 left-[1230px] flex flex-col border-y border-black bg-white">
      <div className="flex h-[35px] items-start gap-[26px] border-b border-[#a0a0a0] pt-[10px] pl-[11px]">
        <span className="mt-[7px] h-[2px] w-2 bg-black" />
        <span className="h-[9px] w-[11px] border border-t-2 border-black" />
      </div>
      <div className="h-[29px] border-b border-[#a0a0a0]" />
      <div className="h-[330px]" />
      <div className="mb-[6px] h-[35px] border-t border-[#a0a0a0] bg-[#f0f0f0]" />
    </div>
  );
}

const mark = "pointer-events-none absolute border-[7px] border-[#fd3a38]";

export default function App() {
  return (
    <div className="flex min-h-screen flex-col overflow-hidden bg-[#f0f0f0] font-['Open_Sans','Noto_Sans_CJK_SC',sans-serif] text-[13px] text-black">
      <Gradients />
      <nav className="flex h-[23px] bg-[#989898] pl-[2px] leading-[18px]">
        <a href="#professional" className="mr-[3px] bg-[#f0f0f0] pr-[14px] pl-4">Professional</a>
        {tabs.map((t) => (
          <a key={t} href={`#${t.toLowerCase()}`} className="px-[18px]">{t}</a>
        ))}
      </nav>
      <Ribbon />
      <Toolbar />
      <div className="h-[26px] border-b border-[#585858] bg-[#989898]" />
      <div className="h-[5px] border-b border-[#8c8c8c] bg-[#dcdcdc]" />

      <main className="relative flex-1 border-t border-black bg-linear-to-b from-white to-[#707370]">
        <Scene />
        <svg viewBox="0 0 16 12" className="absolute top-[608px] left-0 h-3 w-4" aria-hidden="true">
          <path d="M0 1L7 6L0 11ZM9 1L15 6L9 11Z" fill="#adadad" stroke="#a58fc0" strokeWidth="1" />
        </svg>
        <p className="absolute right-[14px] bottom-1 text-xs leading-6 text-[#d0d0d0]">CSDN @3度°~</p>
        <BackWindow />
        <PropertiesDialog />
        <div className={`${mark} top-[159px] left-[163px] h-[265px] w-[422px]`} />
        <div className={`${mark} -top-[6px] left-[638px] h-[58px] w-[444px]`} />
        <div className={`${mark} top-[170px] left-[665px] h-[52px] w-[120px]`} />
        <div className={`${mark} top-[470px] left-[660px] h-[59px] w-[557px]`} />
      </main>
    </div>
  );
}
